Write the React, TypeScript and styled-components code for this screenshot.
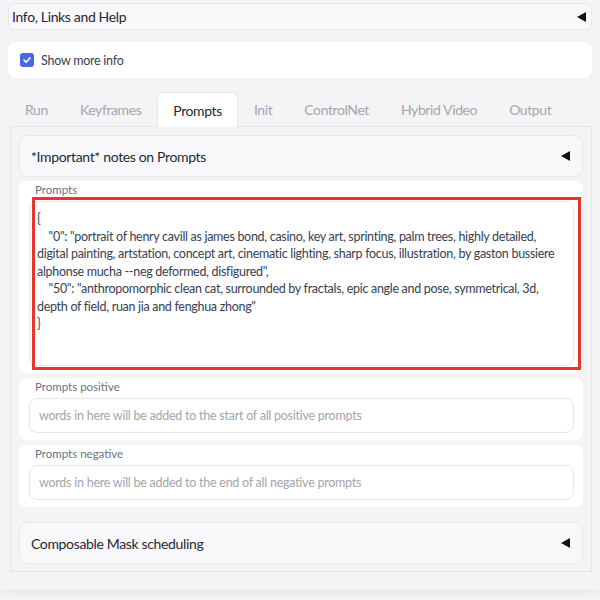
import React from "react";
import styled, { createGlobalStyle } from "styled-components";

const GlobalStyle = createGlobalStyle`
    html, body {
        margin: 0;
        padding: 0;
        background: #f4f4f6;
        font-family: Lato, "Noto Sans", sans-serif;
        color: #1f2937;
    }
    * {
        box-sizing: border-box;
    }
`;

const tabs = ["Run", "Keyframes", "Prompts", "Init", "ControlNet", "Hybrid Video", "Output"];

const promptText = `{
    "0": "portrait of henry cavill as james bond, casino, key art, sprinting, palm trees, highly detailed, digital painting, artstation, concept art, cinematic lighting, sharp focus, illustration, by gaston bussiere alphonse mucha --neg deformed, disfigured",
    "50": "anthropomorphic clean cat, surrounded by fractals, epic angle and pose, symmetrical, 3d, depth of field, ruan jia and fenghua zhong"
}`;

export default function App() {
    return (
        <>
            <GlobalStyle />
            <Page>
                <Accordion $small>
                    <span>Info, Links and Help</span>
                    <Arrow />
                </Accordion>
                <InfoBox>
                    <Check>
                        <svg width="10" height="10" viewBox="0 0 10 10">
                            <path d="M2 5.2 L4.1 7.2 L8 2.9" fill="none" stroke="#fff" strokeWidth="1.6"
                                  strokeLinecap="round" strokeLinejoin="round"/>
                        </svg>
                    </Check>
                    <span>Show more info</span>
                </InfoBox>
                <TabBar>
                    {tabs.map(t => (
                        <Tab key={t} $active={t === "Prompts"}>{t}</Tab>
                    ))}
                </TabBar>
                <Panel>
                    <Accordion>
                        <span>*Important* notes on Prompts</span>
                        <Arrow />
                    </Accordion>
                    <Fields>
                        <Block>
                            <Label>Prompts</Label>
                            <Highlighted>
                                <Area readOnly value={promptText}/>
                                <RedFrame/>
                            </Highlighted>
                        </Block>
                        <Block>
                            <Label>Prompts positive</Label>
                            <Input readOnly placeholder="words in here will be added to the start of all positive prompts"/>
                        </Block>
                        <Block>
                            <Label>Prompts negative</Label>
                            <Input readOnly placeholder="words in here will be added to the end of all negative prompts"/>
                        </Block>
                    </Fields>
                    <Accordion>
                        <span>Composable Mask scheduling</span>
                        <Arrow />
                    </Accordion>
                </Panel>
                <Footer/>
            </Page>
        </>
    );
}

const Page = styled.div`
    width: 600px;
    height: 600px;
    padding: 3px 8px 0 8px;
    display: flex;
    flex-direction: column;
    overflow: hidden;
`;

const Accordion = styled.div<{ $small?: boolean }>`
    display: flex;
    align-items: center;
    justify-content: space-between;
    height: ${p => (p.$small ? "27px" : "42px")};
    padding: ${p => (p.$small ? "0 3px 0 3px" : "0 10px 0 11px")};
    background: #f8f8fa;
    border: 1px solid #e8e8ec;
    border-radius: ${p => (p.$small ? "6px" : "8px")};
    font-size: 14px;
    letter-spacing: -0.35px;
    color: #1f2937;
`;

const Arrow = styled.span`
    width: 0;
    height: 0;
    border-top: 5px solid transparent;
    border-bottom: 5px solid transparent;
    border-right: 9px solid #111;
    margin-right: 2px;
`;

const InfoBox = styled.label`
    margin-top: 12px;
    height: 36px;
    background: #fff;
    border-radius: 8px;
    display: flex;
    align-items: center;
    gap: 7px;
    padding-left: 12px;
    font-size: 12.5px;
    letter-spacing: -0.25px;
    color: #374151;
`;

const Check = styled.span`
    width: 14px;
    height: 14px;
    border-radius: 3px;
    background: #4a67e8;
    display: flex;
    align-items: center;
    justify-content: center;
`;

const TabBar = styled.div`
    margin-top: 14px;
    display: flex;
    padding-left: 1px;
    height: 34px;
    position: relative;
    z-index: 1;
`;

const Tab = styled.div<{ $active?: boolean }>`
    padding: 0 15px;
    height: ${p => (p.$active ? "35px" : "34px")};
    display: flex;
    align-items: center;
    white-space: nowrap;
    font-size: 14px;
    letter-spacing: -0.4px;
    color: ${p => (p.$active ? "#1f2937" : "#a3a6ad")};
    background: ${p => (p.$active ? "#fff" : "transparent")};
    border: 1px solid ${p => (p.$active ? "#e5e7eb" : "transparent")};
    border-bottom: none;
    border-radius: 6px 6px 0 0;
`;

const Panel = styled.div`
    margin: 0 0 0 2px;
    border: 1px solid #e3e4e8;
    padding: 8px 8px 7px 8px;
    display: flex;
    flex-direction: column;
`;

const Fields = styled.div`
    display: flex;
    flex-direction: column;
    gap: 5px;
    margin: 4px 0 15px 0;
`;

const Block = styled.div`
    background: #fff;
    border-radius: 8px;
    padding: 2px 9px 7px 10px;
    display: flex;
    flex-direction: column;
`;

const Label = styled.div`
    font-size: 11.5px;
    color: #6b7280;
    padding: 0 0 4px 6px;
    line-height: 14px;
`;

const Highlighted = styled.div`
    position: relative;
`;

const Area = styled.textarea`
    display: block;
    width: 100%;
    height: 165px;
    resize: none;
    border: 1px solid #e5e7eb;
    border-radius: 8px;
    padding: 8px 7px;
    font-family: Lato, "Noto Sans", sans-serif;
    font-size: 12.5px;
    letter-spacing: -0.3px;
    line-height: 17.5px;
    color: #374151;
    background: #fff;
    outline: none;
    white-space: pre-wrap;
    overflow: hidden;
`;

const RedFrame = styled.div`
    position: absolute;
    left: 3px;
    right: -7px;
    top: -4px;
    bottom: -4px;
    border: 3px solid #e6352b;
    pointer-events: none;
`;

const Input = styled.input`
    display: block;
    width: 100%;
    height: 35px;
    border: 1px solid #e5e7eb;
    border-radius: 8px;
    padding: 0 9px;
    font-family: Lato, "Noto Sans", sans-serif;
    font-size: 12.5px;
    letter-spacing: -0.25px;
    color: #374151;
    outline: none;
    background: #fff;

    &::placeholder {
        color: #a3a6ad;
    }
`;

const Footer = styled.div`
    height: 18px;
    margin: 0 -8px;
    box-shadow: 0 6px 8px -4px rgba(0, 0, 0, 0.08);
`;
